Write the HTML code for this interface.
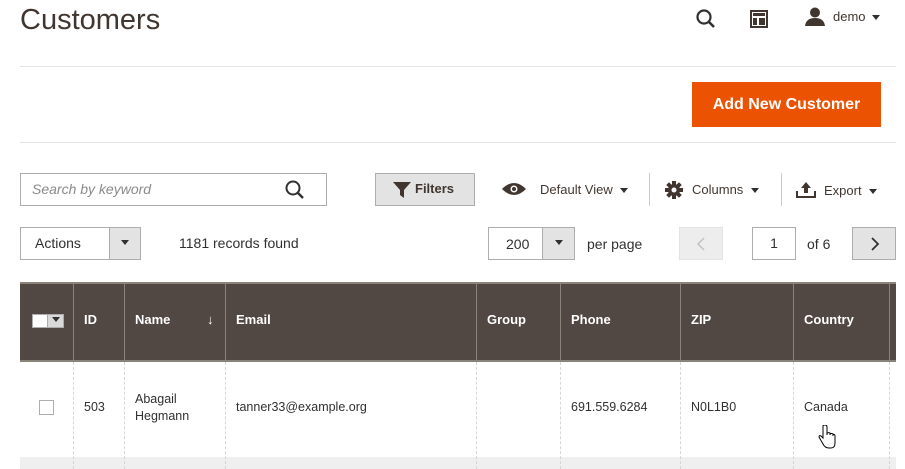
<!DOCTYPE html><html><head><style>
*{margin:0;padding:0;box-sizing:border-box}
body{width:905px;height:469px;overflow:hidden;background:#fff;font-family:"Liberation Sans",sans-serif;color:#303030;position:relative}
.a{position:absolute}
.btn{position:absolute;border:1px solid #adadad;background:#e3e3e3}
.tri{display:inline-block;width:0;height:0;border-left:4px solid transparent;border-right:4px solid transparent;border-top:5px solid #303030;vertical-align:middle}
.hd{font-weight:bold;font-size:13px;color:#fff;top:312px}
.c{font-size:12.5px;color:#303030}
.vl{position:absolute;top:282px;height:80px;width:1px;background:#8a837a}
.dl{position:absolute;top:362px;height:107px;border-left:1px dashed #d6d6d6}
</style></head><body>
<div class="a" style="left:20px;top:4px;font-size:29px;color:#41362f">Customers</div>
<svg class="a" style="left:695px;top:8px" width="22" height="22" viewBox="0 0 22 22"><circle cx="9" cy="9" r="6.5" fill="none" stroke="#303030" stroke-width="2.2"/><line x1="13.5" y1="13.5" x2="19" y2="19" stroke="#303030" stroke-width="2.6"/></svg>
<svg class="a" style="left:750px;top:10px" width="18" height="18"><rect x="1" y="1" width="16" height="16" fill="none" stroke="#41362f" stroke-width="2"/><rect x="3" y="3" width="12" height="3" fill="#41362f"/><rect x="3" y="8" width="4" height="7" fill="#41362f"/><rect x="9" y="8" width="6" height="7" fill="#41362f"/></svg>
<svg class="a" style="left:805px;top:7px" width="20" height="19"><circle cx="10" cy="5.5" r="5" fill="#41362f"/><path d="M0 19 Q1 11 10 11 Q19 11 20 19Z" fill="#41362f"/></svg>
<div class="a" style="left:833px;top:9px;font-size:13px;color:#41362f">demo <span class="tri" style="margin-left:3px"></span></div>
<div class="a" style="left:20px;top:66px;width:876px;height:1px;background:#e3e3e3"></div>
<div class="a" style="left:692px;top:82px;width:189px;height:45px;background:#eb5202;color:#fff;font-weight:bold;font-size:16px;line-height:45px;text-align:center">Add New Customer</div>
<div class="a" style="left:20px;top:142px;width:876px;height:1px;background:#e3e3e3"></div>
<div class="a" style="left:20px;top:173px;width:307px;height:33px;border:1px solid #adadad"></div>
<div class="a" style="left:32px;top:181px;font-size:14px;font-style:italic;color:#8a8a8a">Search by keyword</div>
<svg class="a" style="left:284px;top:179px" width="22" height="22"><circle cx="9" cy="9" r="6.5" fill="none" stroke="#303030" stroke-width="2"/><line x1="13.5" y1="13.5" x2="19" y2="19" stroke="#303030" stroke-width="2.4"/></svg>
<div class="btn" style="left:375px;top:173px;width:100px;height:33px"></div>
<svg class="a" style="left:393px;top:182px" width="18" height="16"><path d="M0 0H18L11 8V16L7 13V8Z" fill="#41362f"/></svg>
<div class="a" style="left:415px;top:181px;font-size:13px;font-weight:bold;color:#41362f">Filters</div>
<svg class="a" style="left:502px;top:182px" width="24" height="14"><path d="M0 7Q12 -5 24 7Q12 19 0 7Z" fill="#41362f"/><circle cx="12" cy="7" r="3.5" fill="#fff"/><circle cx="12" cy="7" r="2" fill="#41362f"/></svg>
<div class="a" style="left:540px;top:182px;font-size:13px;color:#41362f">Default View <span class="tri" style="margin-left:4px"></span></div>
<div class="a" style="left:649px;top:173px;width:1px;height:33px;background:#ccc"></div>
<svg class="a" style="left:665px;top:181px" width="18" height="18" viewBox="-9 -9 18 18"><g fill="#41362f"><circle r="6"/><rect x="-2" y="-9" width="4" height="18"/><rect x="-2" y="-9" width="4" height="18" transform="rotate(45)"/><rect x="-2" y="-9" width="4" height="18" transform="rotate(90)"/><rect x="-2" y="-9" width="4" height="18" transform="rotate(135)"/></g><circle r="2.5" fill="#fff"/></svg>
<div class="a" style="left:692px;top:182px;font-size:13px;color:#41362f">Columns <span class="tri" style="margin-left:4px"></span></div>
<div class="a" style="left:781px;top:173px;width:1px;height:33px;background:#ccc"></div>
<svg class="a" style="left:796px;top:182px" width="20" height="16"><path d="M1 9V15H19V9" fill="none" stroke="#41362f" stroke-width="2"/><path d="M10 0L15 6H12V11H8V6H5Z" fill="#41362f"/></svg>
<div class="a" style="left:824px;top:183px;font-size:13px;color:#41362f">Export <span class="tri" style="margin-left:4px"></span></div>
<div class="a" style="left:20px;top:227px;width:121px;height:33px;border:1px solid #adadad"></div>
<div class="btn" style="left:109px;top:227px;width:32px;height:33px;text-align:center;line-height:29px"><span class="tri"></span></div>
<div class="a" style="left:35px;top:235px;font-size:14px">Actions</div>
<div class="a" style="left:179px;top:235px;font-size:14px">1181 records found</div>
<div class="a" style="left:488px;top:227px;width:87px;height:33px;border:1px solid #adadad"></div>
<div class="btn" style="left:542px;top:227px;width:33px;height:33px;text-align:center;line-height:29px"><span class="tri"></span></div>
<div class="a" style="left:506px;top:236px;font-size:14px">200</div>
<div class="a" style="left:587px;top:236px;font-size:14px">per page</div>
<div class="a" style="left:679px;top:227px;width:44px;height:33px;background:#ededed;border:1px solid #e3e3e3"></div>
<svg class="a" style="left:696px;top:237px" width="10" height="14"><path d="M8 1L2 7L8 13" fill="none" stroke="#c2c2c2" stroke-width="1.5"/></svg>
<div class="a" style="left:752px;top:227px;width:44px;height:33px;border:1px solid #adadad;text-align:center;line-height:31px;font-size:14px">1</div>
<div class="a" style="left:807px;top:236px;font-size:14px">of 6</div>
<div class="btn" style="left:852px;top:227px;width:44px;height:33px"></div>
<svg class="a" style="left:870px;top:237px" width="10" height="14"><path d="M2 1L8 7L2 13" fill="none" stroke="#303030" stroke-width="1.8"/></svg>
<div class="a" style="left:20px;top:282px;width:876px;height:80px;background:#514743;border-top:2px solid #8a837a;border-bottom:2px solid #8a837a"></div>
<div class="vl" style="left:73px"></div><div class="vl" style="left:124px"></div><div class="vl" style="left:225px"></div><div class="vl" style="left:476px"></div><div class="vl" style="left:560px"></div><div class="vl" style="left:680px"></div><div class="vl" style="left:793px"></div><div class="vl" style="left:889px"></div>
<div class="a" style="left:32px;top:314px;width:32px;height:14px;background:#fff;border:1px solid #adadad"></div>
<div class="a" style="left:47px;top:314px;width:17px;height:14px;background:#d9d9d9;border:1px solid #adadad;text-align:center;line-height:10px"><span class="tri" style="border-top-color:#303030"></span></div>
<div class="a hd" style="left:84px">ID</div>
<div class="a hd" style="left:135px">Name</div>
<div class="a hd" style="left:207px;font-weight:normal">&#8595;</div>
<div class="a hd" style="left:236px">Email</div>
<div class="a hd" style="left:487px">Group</div>
<div class="a hd" style="left:571px">Phone</div>
<div class="a hd" style="left:691px">ZIP</div>
<div class="a hd" style="left:804px">Country</div>
<div class="a" style="left:20px;top:457px;width:876px;height:12px;background:#efefef"></div>
<div class="dl" style="left:73px"></div><div class="dl" style="left:124px"></div><div class="dl" style="left:225px"></div><div class="dl" style="left:476px"></div><div class="dl" style="left:560px"></div><div class="dl" style="left:680px"></div><div class="dl" style="left:793px"></div><div class="dl" style="left:889px"></div>
<div class="a" style="left:39px;top:400px;width:15px;height:15px;border:1px solid #adadad"></div>
<div class="a c" style="left:84px;top:400px">503</div>
<div class="a c" style="left:135px;top:391px;line-height:17px">Abagail<br>Hegmann</div>
<div class="a c" style="left:236px;top:400px">tanner33@example.org</div>
<div class="a c" style="left:571px;top:400px">691.559.6284</div>
<div class="a c" style="left:691px;top:400px">N0L1B0</div>
<div class="a c" style="left:804px;top:400px">Canada</div>
<svg class="a" style="left:818px;top:425px" width="18" height="24"><path d="M5 1V13L3 11Q1 10 1 12L5 19Q7 23 11 23H13Q17 23 17 18V11Q17 9 15 9.5V11V9Q13 8 12 9V10V8Q10 7 9 8.5V10V2Q9 0 7 0Q5 0 5 1Z" fill="#fff" stroke="#000" stroke-width="1"/></svg>
</body></html>
